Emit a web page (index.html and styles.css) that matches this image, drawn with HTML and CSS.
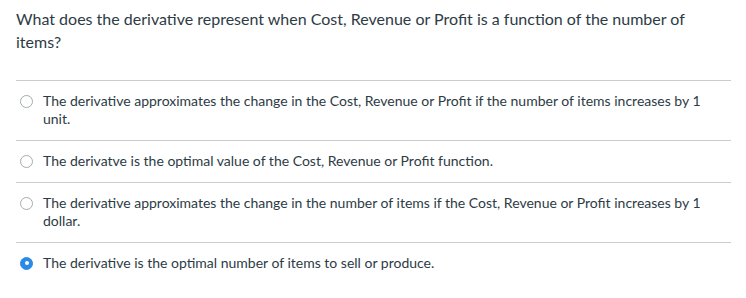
FILE: index.html
```html
<!DOCTYPE html>
<html lang="en">
  <head>
    <meta charset="UTF-8" />
    <meta name="viewport" content="width=device-width, initial-scale=1.0" />
    <title>Quiz Question</title>
    <link rel="stylesheet" href="styles.css">
  </head>
  <body>
    <div class="question">
      <p class="question-text">
        What does the derivative represent when Cost, Revenue or Profit is a function of the number of items?
      </p>

      <div class="answers">
        <label class="answer">
          <span class="radio"></span>
          <span class="answer-text">The derivative approximates the change in the Cost, Revenue or Profit if the number of items increases by 1 unit.</span>
        </label>
        <label class="answer">
          <span class="radio"></span>
          <span class="answer-text">The derivatve is the optimal value of the Cost, Revenue or Profit function.</span>
        </label>
        <label class="answer">
          <span class="radio"></span>
          <span class="answer-text">The derivative approximates the change in the number of items if the Cost, Revenue or Profit increases by 1 dollar.</span>
        </label>
        <label class="answer">
          <span class="radio checked"></span>
          <span class="answer-text">The derivative is the optimal number of items to sell or produce.</span>
        </label>
      </div>
    </div>
  </body>
</html>
```

FILE: styles.css
```css
* {
  margin: 0;
  padding: 0;
  box-sizing: border-box;
}
body {
  font-family: Lato, "Open Sans", sans-serif;
  color: #2d3b45;
  background: #fff;
}

.question {
  padding: 6.5px 15px 0 16px;
}

.question-text {
  font-size: 16px;
  line-height: 23.5px;
  padding-bottom: 26px;
}

.answer {
  display: flex;
  align-items: flex-start;
  gap: 10px;
  padding: 11px 20px 12px 4px;
  border-top: 1px solid #c7cdd1;
  font-size: 14px;
  line-height: 18px;
}

.radio {
  flex: none;
  width: 13px;
  height: 13px;
  margin-top: 3px;
  border: 1px solid #a5abaf;
  border-radius: 50%;
  background: #fff;
  display: flex;
  align-items: center;
  justify-content: center;
}

.radio.checked {
  border-color: #2b8ae8;
  background: #2b8ae8;
}

.radio.checked::after {
  content: "";
  width: 4px;
  height: 4px;
  border-radius: 50%;
  background: #fff;
}
```
